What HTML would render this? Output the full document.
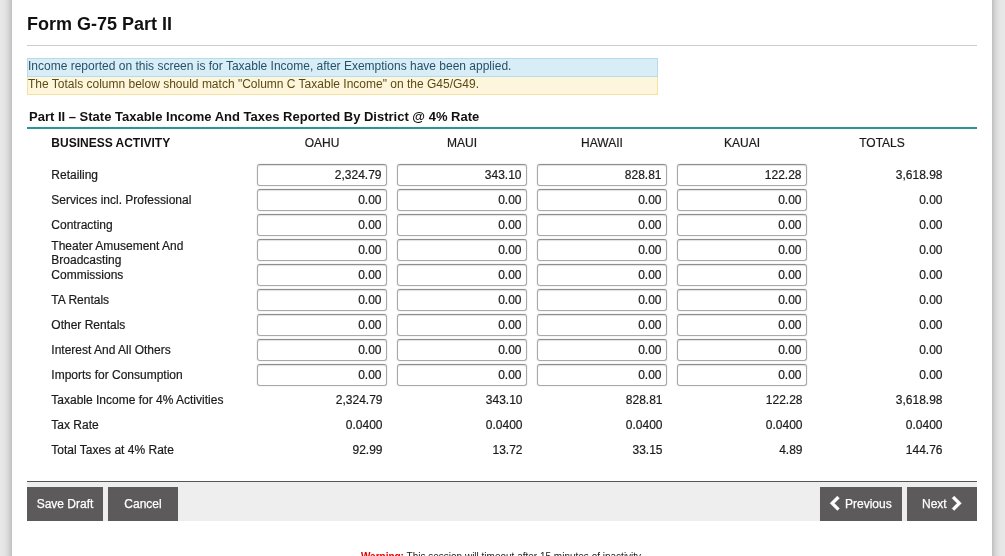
<!DOCTYPE html>
<html>
<head>
<meta charset="utf-8">
<title>Form G-75 Part II</title>
<style>
html,body{margin:0;padding:0;}
body{background:#e8e8e8;font-family:"Liberation Sans",Arial,Helvetica,sans-serif;font-size:12px;color:#1a1a1a;width:1005px;height:556px;overflow:hidden;position:relative;}
#wrap{position:absolute;left:12px;top:-20px;width:980px;height:700px;background:#fff;box-shadow:0 0 9px rgba(0,0,0,.35);}
#inner{position:absolute;left:15px;top:20px;width:950px;will-change:transform;}
h1{position:absolute;left:0px;top:13px;margin:0;font-size:18px;font-weight:bold;color:#111;line-height:22px;white-space:nowrap;}
.hr{position:absolute;left:0;top:45px;width:950px;height:1px;background:#ccc;}
.info{position:absolute;left:0;width:629px;border:1px solid;white-space:nowrap;font-size:12px;line-height:14px;height:17px;}
.info.blue{top:58px;background:#d9edf7;border-color:#b5dcec;color:#245269;}
.info.yel{top:77px;background:#fdf6dc;border-color:#f5e0a0;color:#5c4a12;height:17px;border-top:none}
.ttl{position:absolute;left:2px;top:109px;font-weight:bold;font-size:13px;line-height:16px;color:#111;white-space:nowrap;}
.teal{position:absolute;left:0;top:127px;width:950px;height:2px;background:#2a93a0;}
.row{position:absolute;left:0;width:950px;height:25px;}
.lbl{position:absolute;left:24.3px;top:0;width:190px;line-height:14px;font-size:12px;color:#1a1a1a;-webkit-text-stroke:0.2px #1a1a1a;}
.hd{position:absolute;top:0;width:130px;text-align:center;font-size:12px;line-height:14px;color:#1a1a1a;-webkit-text-stroke:0.2px #1a1a1a;}
.inp{position:absolute;top:0;width:122px;height:20px;border:1px solid #a9a9a9;border-top-color:#8e8e8e;border-radius:3px;background:#fff;text-align:right;padding:0 4.5px 0 1.5px;font-size:12px;line-height:21px;color:#1a1a1a;-webkit-text-stroke:0.2px #1a1a1a;box-shadow:inset 0 1px 1px rgba(0,0,0,.12), 0 0 0 1px rgba(0,0,0,.04);}
.val{position:absolute;top:0;width:125.5px;text-align:right;font-size:12px;line-height:14px;color:#1a1a1a;-webkit-text-stroke:0.2px #1a1a1a;}
.c1{left:230px}.c2{left:370px}.c3{left:510px}.c4{left:650px}
.foot{position:absolute;left:0;top:481px;width:950px;height:39px;background:#eee;border-top:1px solid #555;}
.btn{position:absolute;top:5px;height:34px;background:#5d5a5b;color:#fff;font-size:12px;line-height:35px;text-align:center;-webkit-text-stroke:0.25px #fff;white-space:nowrap;}
.chev{position:absolute;top:9.4px;overflow:visible}
.warn{position:absolute;left:334px;top:551px;text-align:left;font-size:10px;line-height:12px;color:#222;white-space:nowrap;}
.warn b{color:#e00000;}
</style>
</head>
<body>
<div id="wrap"><div id="inner">
<h1>Form G-75 Part II</h1>
<div class="hr"></div>
<div class="info blue">Income reported on this screen is for Taxable Income, after Exemptions have been applied.</div>
<div class="info yel">The Totals column below should match "Column C Taxable Income" on the G45/G49.</div>
<div class="ttl">Part II – State Taxable Income And Taxes Reported By District @ 4% Rate</div>
<div class="teal"></div>
<div class="row" style="top:136px"><div class="lbl" style="font-weight:bold;color:#111;-webkit-text-stroke:0">BUSINESS ACTIVITY</div><div class="hd c1">OAHU</div><div class="hd c2">MAUI</div><div class="hd c3">HAWAII</div><div class="hd c4">KAUAI</div><div class="hd" style="left:790px">TOTALS</div></div>
<div class="row" style="top:164px"><div class="lbl" style="top:4px">Retailing</div><div class="inp c1">2,324.79</div><div class="inp c2">343.10</div><div class="inp c3">828.81</div><div class="inp c4">122.28</div><div class="val" style="left:790px;top:4px">3,618.98</div></div>
<div class="row" style="top:189px"><div class="lbl" style="top:4px">Services incl. Professional</div><div class="inp c1">0.00</div><div class="inp c2">0.00</div><div class="inp c3">0.00</div><div class="inp c4">0.00</div><div class="val" style="left:790px;top:4px">0.00</div></div>
<div class="row" style="top:214px"><div class="lbl" style="top:4px">Contracting</div><div class="inp c1">0.00</div><div class="inp c2">0.00</div><div class="inp c3">0.00</div><div class="inp c4">0.00</div><div class="val" style="left:790px;top:4px">0.00</div></div>
<div class="row" style="top:239px"><div class="lbl" style="top:0px;width:150px">Theater Amusement And Broadcasting</div><div class="inp c1">0.00</div><div class="inp c2">0.00</div><div class="inp c3">0.00</div><div class="inp c4">0.00</div><div class="val" style="left:790px;top:4px">0.00</div></div>
<div class="row" style="top:264px"><div class="lbl" style="top:4px">Commissions</div><div class="inp c1">0.00</div><div class="inp c2">0.00</div><div class="inp c3">0.00</div><div class="inp c4">0.00</div><div class="val" style="left:790px;top:4px">0.00</div></div>
<div class="row" style="top:289px"><div class="lbl" style="top:4px">TA Rentals</div><div class="inp c1">0.00</div><div class="inp c2">0.00</div><div class="inp c3">0.00</div><div class="inp c4">0.00</div><div class="val" style="left:790px;top:4px">0.00</div></div>
<div class="row" style="top:314px"><div class="lbl" style="top:4px">Other Rentals</div><div class="inp c1">0.00</div><div class="inp c2">0.00</div><div class="inp c3">0.00</div><div class="inp c4">0.00</div><div class="val" style="left:790px;top:4px">0.00</div></div>
<div class="row" style="top:339px"><div class="lbl" style="top:4px">Interest And All Others</div><div class="inp c1">0.00</div><div class="inp c2">0.00</div><div class="inp c3">0.00</div><div class="inp c4">0.00</div><div class="val" style="left:790px;top:4px">0.00</div></div>
<div class="row" style="top:364px"><div class="lbl" style="top:4px">Imports for Consumption</div><div class="inp c1">0.00</div><div class="inp c2">0.00</div><div class="inp c3">0.00</div><div class="inp c4">0.00</div><div class="val" style="left:790px;top:4px">0.00</div></div>
<div class="row" style="top:389px"><div class="lbl" style="top:4px">Taxable Income for 4% Activities</div><div class="val c1" style="top:4px">2,324.79</div><div class="val c2" style="top:4px">343.10</div><div class="val c3" style="top:4px">828.81</div><div class="val c4" style="top:4px">122.28</div><div class="val" style="left:790px;top:4px">3,618.98</div></div>
<div class="row" style="top:414px"><div class="lbl" style="top:4px">Tax Rate</div><div class="val c1" style="top:4px">0.0400</div><div class="val c2" style="top:4px">0.0400</div><div class="val c3" style="top:4px">0.0400</div><div class="val c4" style="top:4px">0.0400</div><div class="val" style="left:790px;top:4px">0.0400</div></div>
<div class="row" style="top:439px"><div class="lbl" style="top:4px">Total Taxes at 4% Rate</div><div class="val c1" style="top:4px">92.99</div><div class="val c2" style="top:4px">13.72</div><div class="val c3" style="top:4px">33.15</div><div class="val c4" style="top:4px">4.89</div><div class="val" style="left:790px;top:4px">144.76</div></div>
<div class="foot">
 <div class="btn" style="left:0;width:76px">Save Draft</div>
 <div class="btn" style="left:81px;width:70px">Cancel</div>
 <div class="btn" style="left:793px;width:82px"><svg class="chev" style="left:9.9px" width="10" height="15" viewBox="0 0 10 15"><polygon points="0,7.3 7.3,0 9.5,2.2 4.4,7.3 9.5,12.4 7.3,14.6" fill="#fff" stroke="#fff" stroke-width="0.3" stroke-linejoin="round"/></svg><span style="position:absolute;left:25px;top:0">Previous</span></div>
 <div class="btn" style="left:880px;width:70px"><span style="position:absolute;left:15px;top:0">Next</span><svg class="chev" style="left:44.6px" width="10" height="15" viewBox="0 0 10 15"><polygon points="9.5,7.3 2.2,0 0,2.2 5.1,7.3 0,12.4 2.2,14.6" fill="#fff" stroke="#fff" stroke-width="0.3" stroke-linejoin="round"/></svg></div>
</div>
<div class="warn"><b>Warning:</b> This session will timeout after 15 minutes of inactivity.</div>
</div></div>
</body>
</html>
